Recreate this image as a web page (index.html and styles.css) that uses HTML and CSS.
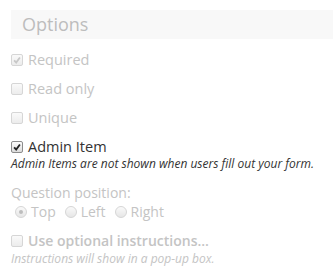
FILE: index.html
```html
<!DOCTYPE html>
<html lang="en">
<head>
  <meta charset="UTF-8" />
  <title>Options</title>
  <link rel="stylesheet" href="styles.css">
</head>
<body>

  <div class="panel">
    <div class="panel-title">Options</div>

    <div class="option disabled">
      <span class="box checked"><svg viewBox="0 0 12 12"><path d="M2.5 6.5 L5 9 L9.5 3" /></svg></span>
      Required
    </div>
    <div class="option disabled">
      <span class="box"></span>
      Read only
    </div>
    <div class="option disabled">
      <span class="box"></span>
      Unique
    </div>

    <div class="option">
      <span class="box checked"><svg viewBox="0 0 12 12"><path d="M2.5 6.5 L5 9 L9.5 3" /></svg></span>
      Admin Item
    </div>
    <div class="hint">Admin Items are not shown when users fill out your form.</div>

    <div class="group disabled">
      <div class="group-label">Question position:</div>
      <div class="radios">
        <span class="radio-item"><span class="dot checked"></span>Top</span>
        <span class="radio-item"><span class="dot"></span>Left</span>
        <span class="radio-item"><span class="dot"></span>Right</span>
      </div>
    </div>

    <div class="option disabled strong">
      <span class="box"></span>
      Use optional instructions...
    </div>
    <div class="hint disabled">Instructions will show in a pop-up box.</div>
  </div>

</body>
</html>
```

FILE: styles.css
```css
body {
  margin: 0;
  font-family: 'Open Sans', sans-serif;
  color: #333;
  background: #fff;
}

.panel {
  padding: 10px 0 0 11px;
}

.panel-title {
  background: #f8f8f8;
  color: #bdbdbd;
  font-size: 18px;
  line-height: 29px;
  padding-left: 11px;
  margin-bottom: 6px;
}

.option {
  display: flex;
  align-items: center;
  gap: 5px;
  font-size: 14.5px;
  height: 29px;
}

.box {
  width: 10px;
  height: 10px;
  border: 1px solid #8c8c8c;
  border-radius: 2px;
  background: linear-gradient(#fcfcfc, #dcdcdc);
  display: flex;
}

.box svg {
  width: 10px;
  height: 10px;
  fill: none;
  stroke: #222;
  stroke-width: 2.2;
}

.disabled .box {
  border-color: #d6d6d6;
  background: linear-gradient(#fafafa, #ececec);
}

.disabled .box svg {
  stroke: #c8c8c8;
}

.disabled {
  color: #c4c4c4;
}

.strong {
  font-weight: 600;
  font-size: 14px;
  margin-top: 5px;
}

.hint {
  font-size: 12px;
  font-style: italic;
  line-height: 16px;
  margin-top: -5px;
}

.hint.disabled {
  margin-top: -4px;
}

.group {
  margin-top: 11px;
}

.group-label {
  font-size: 14px;
  line-height: 19px;
}

.radios {
  display: flex;
  gap: 9px;
  padding-left: 4px;
  font-size: 14px;
  line-height: 19px;
}

.radio-item {
  display: flex;
  align-items: center;
  gap: 4px;
}

.dot {
  width: 10px;
  height: 10px;
  border: 1px solid #d6d6d6;
  border-radius: 50%;
  background: linear-gradient(#fafafa, #e6e6e6);
  display: flex;
  align-items: center;
  justify-content: center;
}

.dot.checked::after {
  content: "";
  width: 4px;
  height: 4px;
  border-radius: 50%;
  background: #bdbdbd;
}
```
